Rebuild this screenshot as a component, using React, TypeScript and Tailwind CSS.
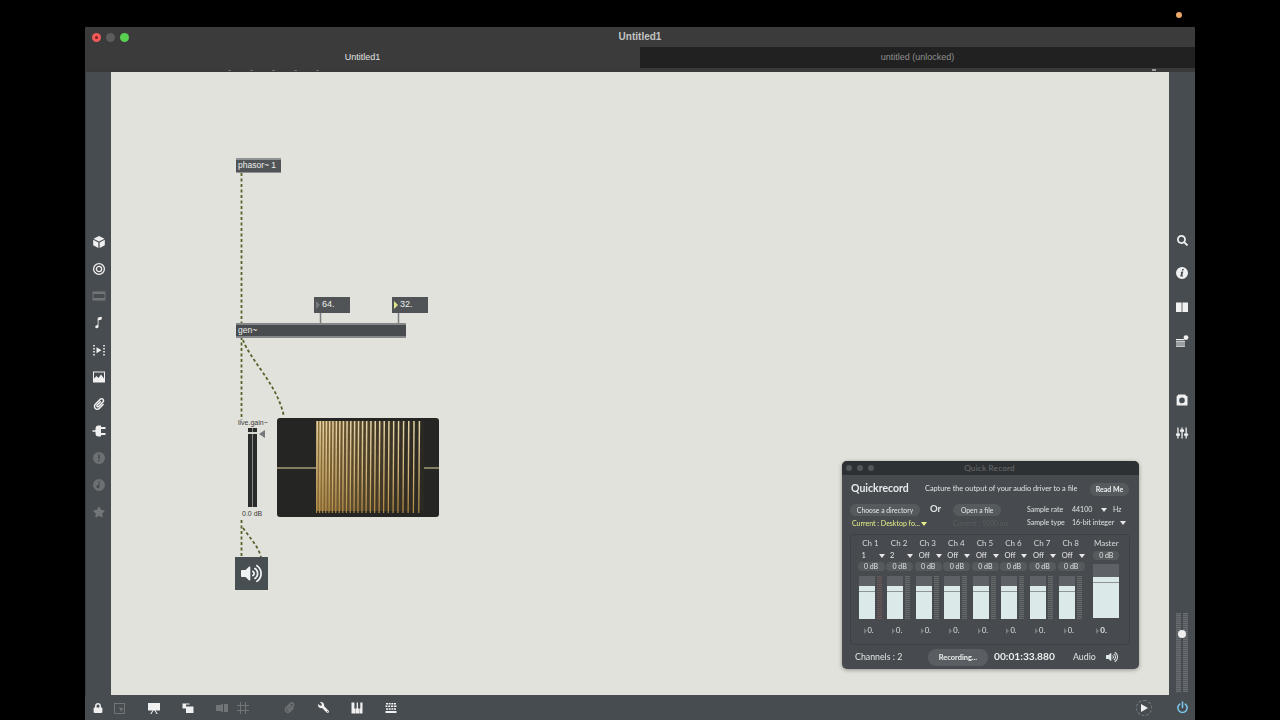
import React from "react";
import { FaLock, FaWrench, FaStar, FaPaperclip, FaSearch, FaVolumeUp } from "react-icons/fa";
import { IoMusicalNote } from "react-icons/io5";

const chans = ["Ch 1", "Ch 2", "Ch 3", "Ch 4", "Ch 5", "Ch 6", "Ch 7", "Ch 8"];
const opts = ["1", "2", "Off", "Off", "Off", "Off", "Off", "Off"];

function waveBars() {
  const xs: number[] = [];
  let x = 316;
  while (x < 423.5) {
    xs.push(x);
    x += 3 + ((x - 316) / 109) * 2.7;
  }
  return xs;
}

const Tri = ({ c = "border-t-[#e8e8e8]" }: { c?: string }) => (
  <span className={`inline-block w-0 h-0 border-l-[3.5px] border-r-[3.5px] border-t-[4px] border-l-transparent border-r-transparent ${c}`} />
);

const Ic = ({ children, o = 1, cn = "" }: { children: React.ReactNode; o?: number; cn?: string }) => (
  <svg width="14" height="14" viewBox="0 0 14 14" className={cn} opacity={o} fill="#f0f0f0">{children}</svg>
);

function LeftBar() {
  const common = "flex items-center justify-center h-[27px] text-[#f0f0f0]";
  return (
    <div className="w-[26px] bg-[#474c50] flex flex-col pt-[156px] border-l border-[#3a3d40]">
      <div className={common}><Ic><path d="M7 1l5.5 2.8L7 6.4 1.5 3.8z" /><path d="M1.2 4.8L6.4 7.4v5.6L1.2 10.2z" /><path d="M12.8 4.8L7.6 7.4v5.6l5.2-2.8z" /></Ic></div>
      <div className={common}><Ic><circle cx="7" cy="7" r="5.4" fill="none" stroke="#f0f0f0" strokeWidth="1.3" /><circle cx="7" cy="7" r="2.6" fill="none" stroke="#f0f0f0" strokeWidth="1.3" /></Ic></div>
      <div className={common}><Ic o={0.25}><path fillRule="evenodd" d="M0.5 2.5h13v9h-13zM1.5 5v4h11V5z" /></Ic></div>
      <div className={common}><IoMusicalNote size={13} /></div>
      <div className={common}><Ic><path d="M1.2 2h1.6v1.6H1.2zM1.2 5h1.6v1.6H1.2zM1.2 8h1.6v1.6H1.2zM1.2 11h1.6v1.6H1.2zM11.2 2h1.6v1.6h-1.6zM11.2 5h1.6v1.6h-1.6zM11.2 8h1.6v1.6h-1.6zM11.2 11h1.6v1.6h-1.6z" /><path d="M4.5 4.2L9.5 7.2 4.5 10.2z" /></Ic></div>
      <div className={common}><Ic><path fillRule="evenodd" d="M1 1.5h12v11H1zM2 2.5v6l2.5-2.5 2 2 2.5-3.5 3 4V2.5z" /></Ic></div>
      <div className={common}><FaPaperclip size={12} /></div>
      <div className={common}><Ic><path d="M0.5 6.2h3V4.4a3 3 0 013-2.9H9v11H6.5a3 3 0 01-3-2.9V7.8h-3z" /><path d="M9 3h4.5v2H9zM9 9h4.5v2H9z" /></Ic></div>
      <div className={common}><Ic o={0.22}><path fillRule="evenodd" d="M7 1a6 6 0 100 12A6 6 0 007 1zM6.2 3.6h1.6v4.4H6.2zM6.2 9h1.6v1.6H6.2z" /></Ic></div>
      <div className={common}><Ic o={0.22}><path fillRule="evenodd" d="M7 1a6 6 0 100 12A6 6 0 007 1zM6.6 3h1v5.5a1.6 1.6 0 11-1-1.4z" /></Ic></div>
      <div className={common}><FaStar size={12} className="opacity-25" /></div>
    </div>
  );
}

function RightBar() {
  const common = "flex items-center justify-center text-[#f0f0f0]";
  return (
    <div className="w-[26px] bg-[#474c50] flex flex-col items-center pt-[158px] relative">
      <div className={`${common} h-[20px]`}><FaSearch size={11} /></div>
      <div className={`${common} h-[20px] mt-[13px]`}>
        <Ic><path fillRule="evenodd" d="M7 1a6 6 0 100 12A6 6 0 007 1zM7.2 3h1.6l-.3 1.5H6.9zM6.6 5.6h1.7l-1 4h.8l-.2.9H5.3l.9-4h-.8z" /></Ic>
      </div>
      <div className={`${common} h-[20px] mt-[14px]`}><Ic><path d="M1 2.5h5.6V12H1zM7.4 2.5H13V12H7.4z" /></Ic></div>
      <div className={`${common} h-[20px] mt-[14px]`}>
        <Ic><path d="M1 5h8.5v1.2H1zM1 7.2h9v1.2H1zM1 9.4h9v1.2H1zM1 11.6h9v1.2H1z" /><circle cx="11" cy="3.6" r="2.4" /></Ic>
      </div>
      <div className={`${common} h-[20px] mt-[39px]`}>
        <Ic><path fillRule="evenodd" d="M3.4 1.6h6.8l1 1.4h1.3v9.4H1.6V3.4zM7 4.6a2.8 2.8 0 100 5.6 2.8 2.8 0 000-5.6z" /></Ic>
      </div>
      <div className={`${common} h-[20px] mt-[13px]`}>
        <Ic><path d="M2.3 1.5h1.3v11H2.3zM6.4 1.5h1.3v11H6.4zM10.5 1.5h1.3v11h-1.3z" /><path d="M1 7.5h4v2.2H1zM5 3.6h4v2.2H5zM9.1 7.5h4v2.2H9.1z" /></Ic>
      </div>
      <div className="mt-[170px] flex gap-[2px] relative h-[80px] items-start">
        <div className="w-[5px] h-[79px] bg-[repeating-linear-gradient(180deg,#686d71_0_1px,#565a5e_1px_2px)]" />
        <div className="w-[5px] h-[79px] bg-[repeating-linear-gradient(180deg,#686d71_0_1px,#565a5e_1px_2px)]" />
        <div className="absolute left-[2px] top-[17px] w-[8px] h-[8px] rounded-full bg-[#eeeeee]" />
      </div>
    </div>
  );
}

function BottomBar() {
  return (
    <div className="h-[25px] bg-[#474c50] flex items-center text-[#f0f0f0] relative shrink-0">
      <div className="w-[26px] flex justify-center"><FaLock size={10} /></div>
      <div className="w-[20px] flex justify-center -ml-[1px]"><Ic o={0.25}><path fillRule="evenodd" d="M1 2h11v11H1zM2 3v9h9V3z" /><path d="M6 6l5 2-2 1-1 2z" /></Ic></div>
      <div className="w-[14px] flex justify-center ml-[17px]"><Ic><path d="M1 2h12v7.5H1z" /><path d="M3.2 13l2.6-4h1l-2.4 4zM10.8 13L8.2 9h-1l2.4 4z" /></Ic></div>
      <div className="w-[14px] flex justify-center ml-[20px]"><Ic><path d="M1.5 2.5h7v1H1.5zM1.5 3.5h3.5v4H1.5z" /><path d="M5 5.5h7.5v6.5H5z" /></Ic></div>
      <div className="w-[14px] flex justify-center ml-[20px]"><Ic o={0.25}><path d="M1 4h4l3-1.5v9L5 10H1zM9 3h4v8H9z" /></Ic></div>
      <div className="w-[14px] flex justify-center ml-[7px]"><Ic o={0.25}><path d="M4 1h1v12H4zM9 1h1v12H9zM1 4h12v1H1zM1 9h12v1H1z" /></Ic></div>
      <div className="w-[14px] flex justify-center ml-[32px]"><FaPaperclip size={11} className="opacity-25" /></div>
      <div className="w-[14px] flex justify-center ml-[20px]"><FaWrench size={11} className="-scale-x-100" /></div>
      <div className="w-[14px] flex justify-center ml-[20px]"><Ic><path fillRule="evenodd" d="M1.5 1.5h11v11h-11zM4.4 1.5v6h1v5h.3v-5h1v-6zM8 1.5v6h1v5h.3v-5h1v-6z" /></Ic></div>
      <div className="w-[14px] flex justify-center ml-[20px]"><Ic><path d="M2 2h2v1.5H2zM4.7 2h2v1.5h-2zM7.4 2h2v1.5h-2zM10 2h2v1.5h-2zM1.5 4.6h2v1.5h-2zM4.2 4.6h2v1.5h-2zM7 4.6h2v1.5H7zM9.7 4.6h2.8v1.5H9.7zM2 7.2h2v1.5H2zM4.7 7.2h2v1.5h-2zM7.4 7.2h2v1.5h-2zM10 7.2h2v1.5h-2zM1.5 10h11v2h-11z" /></Ic></div>
      <div className="ml-auto flex items-center">
        <div className="w-[16px] h-[16px] rounded-full border border-dashed border-[#7a7e82] flex items-center justify-center">
          <span className="block w-0 h-0 border-l-[7px] border-y-[4px] border-y-transparent border-l-[#eeeeee] ml-[1px]" />
        </div>
        <div className="w-[26px] ml-[17px] flex justify-center">
          <svg width="13" height="13" viewBox="0 0 14 14" fill="none" stroke="#7cc4ec" strokeWidth="1.7" strokeLinecap="round"><path d="M7 1v6" /><path d="M4 3.4a5 5 0 106 0" /></svg>
        </div>
      </div>
    </div>
  );
}

function Strip({ name, opt, i }: { name: string; opt: string; i: number }) {
  return (
    <div className="w-[28.6px] flex flex-col items-start">
      <div className="w-[26px] text-center text-[8px] leading-[11px] text-[#d5d8da]">{name}</div>
      <div className="h-[13px] pl-[4px] w-[27px] flex items-center justify-between text-[7.5px] text-[#e8e8e8]">
        <span>{opt}</span><Tri />
      </div>
      <div className="w-[27px] h-[9px] rounded-[4px] bg-[#555a5d] text-[7px] leading-[9px] text-center text-[#dfe2e3]">0 dB</div>
      <div className="flex gap-[2px] mt-[5px] ml-[1px]">
        <div className="w-[16px] h-[43px] bg-[#5e6266] flex flex-col justify-end">
          <div className="h-[33px] bg-[#dce9e9] relative"><div className="absolute top-[5px] left-0 right-0 h-[1px] bg-[#8e9494]" /></div>
        </div>
        <div className={`w-[5px] h-[43px] ${i === 0 ? "bg-[repeating-linear-gradient(180deg,#6c5555_0_1px,#4b4e50_1px_2px)]" : "bg-[repeating-linear-gradient(180deg,#64696a_0_1px,#4e5255_1px_2px)]"}`} />
      </div>
      <div className="mt-[7px] ml-[6px] flex items-center gap-[1px] text-[7.5px] leading-[9px] text-[#e0e0e0]">
        <span className="block w-0 h-0 border-l-[3px] border-y-[3px] border-y-transparent border-l-[#777b7e]" />0.
      </div>
    </div>
  );
}

function QuickRecord() {
  return (
    <div className="absolute left-[731px] top-[389px] w-[297px] h-[208px] rounded-[5px] bg-[#474b4f] shadow-[0_1px_4px_rgba(0,0,0,0.35)] flex flex-col overflow-hidden font-['Lato',sans-serif] blur-[0.3px]">
      <div className="h-[14px] bg-[#2e3133] flex items-center relative shrink-0">
        <div className="flex gap-[5px] pl-[4px]">
          <span className="w-[6px] h-[6px] rounded-full bg-[#54575a]" />
          <span className="w-[6px] h-[6px] rounded-full bg-[#54575a]" />
          <span className="w-[6px] h-[6px] rounded-full bg-[#54575a]" />
        </div>
        <span className="flex-1 text-center pr-[34px] text-[8.2px] text-[#6b6e70] tracking-[0.2px]">Quick Record</span>
      </div>
      <div className="flex items-center pl-[9px] pr-[10px] h-[14px] mt-[7px] shrink-0">
        <span className="w-[74px] text-[10.5px] font-bold text-[#e8eaeb]">Quickrecord</span>
        <span className="text-[7.35px] whitespace-nowrap text-[#dfe2e3]">Capture the output of your audio driver to a file</span>
        <span className="ml-auto w-[39px] h-[13px] rounded-[6px] bg-[#555a5d] text-center text-[7px] leading-[13px] font-bold text-[#eef0f0]">Read Me</span>
      </div>
      <div className="flex mt-[7px] pl-[8px] shrink-0">
        <div className="w-[177px] flex flex-col">
          <div className="flex items-center h-[13px]">
            <span className="w-[70px] h-[12px] rounded-[6px] bg-[#555a5d] text-center text-[6.8px] leading-[12px] text-[#e4e6e7]">Choose a directory</span>
            <span className="ml-[10px] text-[9.5px] font-bold text-[#e0e2e3]">Or</span>
            <span className="ml-[12px] w-[48px] h-[12px] rounded-[6px] bg-[#555a5d] text-center text-[6.8px] leading-[12px] text-[#e4e6e7]">Open a file</span>
          </div>
          <div className="flex items-center h-[13px] mt-[1px] pl-[2px] text-[7px] text-[#e6f08a]">
            <span>Current : Desktop fo...</span><span className="ml-[1px] flex"><Tri c="border-t-[#e6f08a]" /></span>
            <span className="ml-[26px] text-[#595d60]">Current : 1000 ms</span>
          </div>
        </div>
        <div className="flex flex-col text-[7px] text-[#dfe2e3]">
          <div className="flex items-center h-[13px]">
            <span className="w-[45px]">Sample rate</span><span className="w-[29px]">44100</span><Tri /><span className="ml-[6px]">Hz</span>
          </div>
          <div className="flex items-center h-[13px]">
            <span className="w-[45px]">Sample type</span><span className="w-[48px]">16-bit integer</span><Tri />
          </div>
        </div>
      </div>
      <div className="mx-[8px] mt-[4px] h-[111px] w-[280px] rounded-[4px] border border-[#3c4043] pt-[3px] pl-[6.5px] flex shrink-0">
        {chans.map((c, i) => <Strip key={c} name={c} opt={opts[i]} i={i} />)}
        <div className="w-[26px] ml-[7px] flex flex-col items-center">
          <div className="text-[8px] leading-[11px] text-[#d5d8da]">Master</div>
          <div className="w-[26px] h-[9px] mt-[2px] rounded-[4px] bg-[#555a5d] text-[7px] leading-[9px] text-center text-[#dfe2e3]">0 dB</div>
          <div className="w-[26px] h-[54px] mt-[4px] bg-[#5e6266] flex flex-col justify-end">
            <div className="h-[41px] bg-[#dce9e9] relative"><div className="absolute top-[5px] left-0 right-0 h-[1px] bg-[#8e9494]" /></div>
          </div>
          <div className="mt-[8px] flex items-center gap-[1px] text-[8px] leading-[9px] font-bold text-[#e0e0e0] self-start ml-[3px]">
            <span className="block w-0 h-0 border-l-[3px] border-y-[3px] border-y-transparent border-l-[#777b7e]" />0.
          </div>
        </div>
      </div>
      <div className="flex items-center mt-[3px] h-[18px] pl-[13px] shrink-0">
        <span className="w-[73px] text-[8.8px] text-[#e0e3e4]">Channels : 2</span>
        <span className="w-[60px] h-[17px] rounded-[8px] bg-[#5a5e62] text-center text-[7.4px] leading-[17px] font-bold text-[#eceeee]">Recording...</span>
        <span className="ml-[6px] w-[79px] text-[10.2px] font-bold text-[#eceeee]">00:01:33.880</span>
        <span className="text-[8.8px] text-[#e0e3e4]">Audio</span>
        <span className="ml-[10px] text-[#dfe8e8]"><FaVolumeUp size={12} /></span>
      </div>
    </div>
  );
}

function Canvas() {
  return (
    <div className="flex-1 relative bg-[#e1e2db] overflow-hidden font-['Liberation_Sans',sans-serif]">
      <svg className="absolute left-0 top-0" width="1058" height="623" viewBox="111 72 1058 623" fill="none">
        <g stroke="#55632a" strokeWidth="1.8" strokeDasharray="3 2.5">
          <path d="M241.5 173V323" />
          <path d="M241.5 337V420" />
          <path d="M243 340C250 360 278 385 284 417" />
          <path d="M241.5 520V557" />
          <path d="M243 528C250 538 258 546 261 557" />
        </g>
        <g stroke="#7a7e80" strokeWidth="1.5">
          <path d="M320.5 313V323" />
          <path d="M398.5 313V323" />
        </g>
      </svg>

      <div className="absolute left-[125px] top-[86px] w-[45px] h-[15px] bg-[#505456] border-t-2 border-b border-[#909395] text-[8.5px] leading-[11px] text-[#eeeeee] pl-[2px]">phasor~ 1</div>

      <div className="absolute left-[203px] top-[225px] w-[36px] h-[16px] bg-[#505456] flex items-center text-[9px] text-[#eeeeee]">
        <span className="block w-0 h-0 ml-[2px] mr-[2px] border-l-[4px] border-y-[4px] border-y-transparent border-l-[#777b7e]" />64.
      </div>
      <div className="absolute left-[281px] top-[225px] w-[36px] h-[16px] bg-[#505456] flex items-center text-[9px] text-[#eeeeee]">
        <span className="block w-0 h-0 ml-[2px] mr-[2px] border-l-[4px] border-y-[4px] border-y-transparent border-l-[#dfe58a]" />32.
      </div>

      <div className="absolute left-[125px] top-[251px] w-[170px] h-[15px] bg-[#484c4f] border-t-2 border-b-2 border-[#85888a] text-[8.5px] leading-[10px] text-[#eeeeee] pl-[2px]">gen~</div>

      <div className="absolute left-[127px] top-[346px] text-[7px] leading-[9px] text-[#3c3c3c]">live.gain~</div>
      <div className="absolute left-[137px] top-[356px] w-[9px] h-[79px] bg-[#2a2c2c]">
        <span className="absolute left-[4px] top-0 w-[1px] h-full bg-[#8b8b85]" />
        <span className="absolute left-0 top-[4px] w-full h-[2px] bg-[#d8d8d2]" />
      </div>
      <span className="absolute left-[148px] top-[358px] block w-0 h-0 border-r-[6px] border-y-[4px] border-y-transparent border-r-[#74787a]" />
      <div className="absolute left-[131px] top-[437px] text-[7px] leading-[9px] text-[#3c3c3c]">0.0 dB</div>

      <div className="absolute left-[166px] top-[346px] w-[162px] h-[99px] rounded-[3px] bg-[#252523] overflow-hidden">
        <svg width="162" height="99" viewBox="277 418 162 99" fill="none">
          <defs>
            <linearGradient id="fade" x1="316" x2="424" y1="0" y2="0" gradientUnits="userSpaceOnUse">
              <stop offset="0" stopColor="#b5893f" stopOpacity="0.75" />
              <stop offset="0.3" stopColor="#8f6d35" stopOpacity="0.55" />
              <stop offset="1" stopColor="#5a4622" stopOpacity="0.1" />
            </linearGradient>
            <linearGradient id="bar" x1="0" x2="0" y1="421" y2="513" gradientUnits="userSpaceOnUse">
              <stop offset="0" stopColor="#e0d2a8" />
              <stop offset="0.6" stopColor="#cdb074" />
              <stop offset="1" stopColor="#b08a44" />
            </linearGradient>
          </defs>
          <rect x="316" y="421" width="108" height="90" fill="url(#fade)" />
          <path d="M277 468H317M424 468H440" stroke="#a59a78" strokeWidth="1.3" />
          {waveBars().map((x) => (
            <path key={x} d={`M${x + 0.5} 421L${x + 2} 421L${x + 1.2} 513L${x} 513Z`} fill="url(#bar)" />
          ))}
        </svg>
      </div>

      <div className="absolute left-[124px] top-[485px] w-[33px] h-[33px] bg-[#474f52] flex items-center justify-center text-[#f0f3f3]">
        <FaVolumeUp size={21} />
      </div>

      <QuickRecord />
    </div>
  );
}

export default function App() {
  return (
    <div className="w-[1280px] h-[720px] bg-black overflow-hidden font-['Lato',sans-serif] flex flex-col">
      <div className="h-[27px] shrink-0 flex justify-end pr-[98px] pt-[12px]">
        <span className="w-[6px] h-[6px] rounded-full bg-[#e9a866]" />
      </div>
      <div className="mx-[85px] flex-1 flex flex-col min-h-0 bg-[#3a3a3a]">
        <div className="h-[20px] shrink-0 bg-[#3b3b3b] flex items-center relative">
          <div className="flex gap-[5px] pl-[7px] absolute left-0">
            <span className="w-[9px] h-[9px] rounded-full bg-[#ee5a5a] flex items-center justify-center"><span className="w-[3px] h-[3px] rounded-full bg-[#8a1a1a]" /></span>
            <span className="w-[9px] h-[9px] rounded-full bg-[#5c5c5e]" />
            <span className="w-[9px] h-[9px] rounded-full bg-[#58cf4e]" />
          </div>
          <span className="flex-1 text-center pb-[1px] text-[10px] font-bold text-[#c4c4c4] font-['Liberation_Sans',sans-serif]">Untitled1</span>
        </div>
        <div className="h-[21px] shrink-0 flex text-[9px] font-['Liberation_Sans',sans-serif]">
          <div className="w-[555px] bg-[#3b3b3b] text-center leading-[21px] text-[#e2e2e2]">Untitled1</div>
          <div className="flex-1 bg-[#212121] text-center leading-[21px] text-[#8f8f8f]">untitled (unlocked)</div>
        </div>
        <div className="h-[4px] shrink-0 bg-[#3a3a3a] flex items-center pl-[143px] gap-[19px]">
          {[0, 1, 2, 3, 4].map((k) => <span key={k} className="w-[3px] h-[1px] bg-[#6c6c6c]" />)}
          <span className="ml-auto mr-[39px] w-[4px] h-[2px] bg-[#9a9a9a]" />
        </div>
        <div className="flex-1 flex min-h-0">
          <LeftBar />
          <Canvas />
          <RightBar />
        </div>
        <BottomBar />
      </div>
    </div>
  );
}
